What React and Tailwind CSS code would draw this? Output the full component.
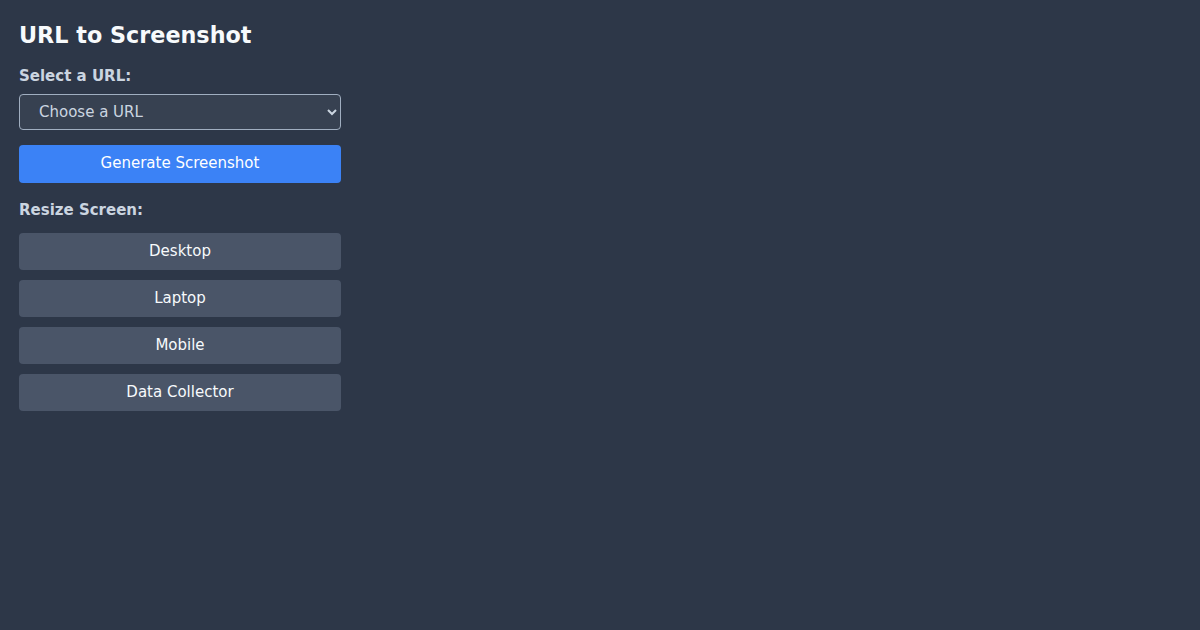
import React from 'react';

const sizes = ['Desktop', 'Laptop', 'Mobile', 'Data Collector'];

const App = () => {
  return (
    <div className="min-h-screen h-[630px] bg-[#2d3748] text-[#f7fafc]" style={{ fontFamily: '"DejaVu Sans", sans-serif' }}>
      <div className="w-[360px] p-[19px] pt-[20px]">
        <h1 className="text-[22.3px] leading-[30px] font-bold mb-[15px]">URL to Screenshot</h1>

        <label className="block text-[15px] font-bold text-[#cbd5e0] mb-[6px]">Select a URL:</label>
        <select className="w-[322px] h-9 pl-[15px] pr-2 bg-[#374151] border border-[#a0aec0] rounded text-[15px] text-[#cbd5e0]">
          <option>Choose a URL</option>
        </select>

        <button className="mt-[15px] w-[322px] h-[38px] bg-[#3b82f6] rounded-sm text-[15px] text-white">Generate Screenshot</button>

        <h2 className="mt-4 mb-3 text-[15px] font-bold text-[#cbd5e0]">Resize Screen:</h2>
        <div className="flex flex-col gap-[10px]">
          {sizes.map((s) => (
            <button key={s} className="w-[322px] h-[37px] bg-[#4a5568] rounded-sm text-[15px] text-[#f7fafc]">{s}</button>
          ))}
        </div>
      </div>
    </div>
  );
};

export default App;
